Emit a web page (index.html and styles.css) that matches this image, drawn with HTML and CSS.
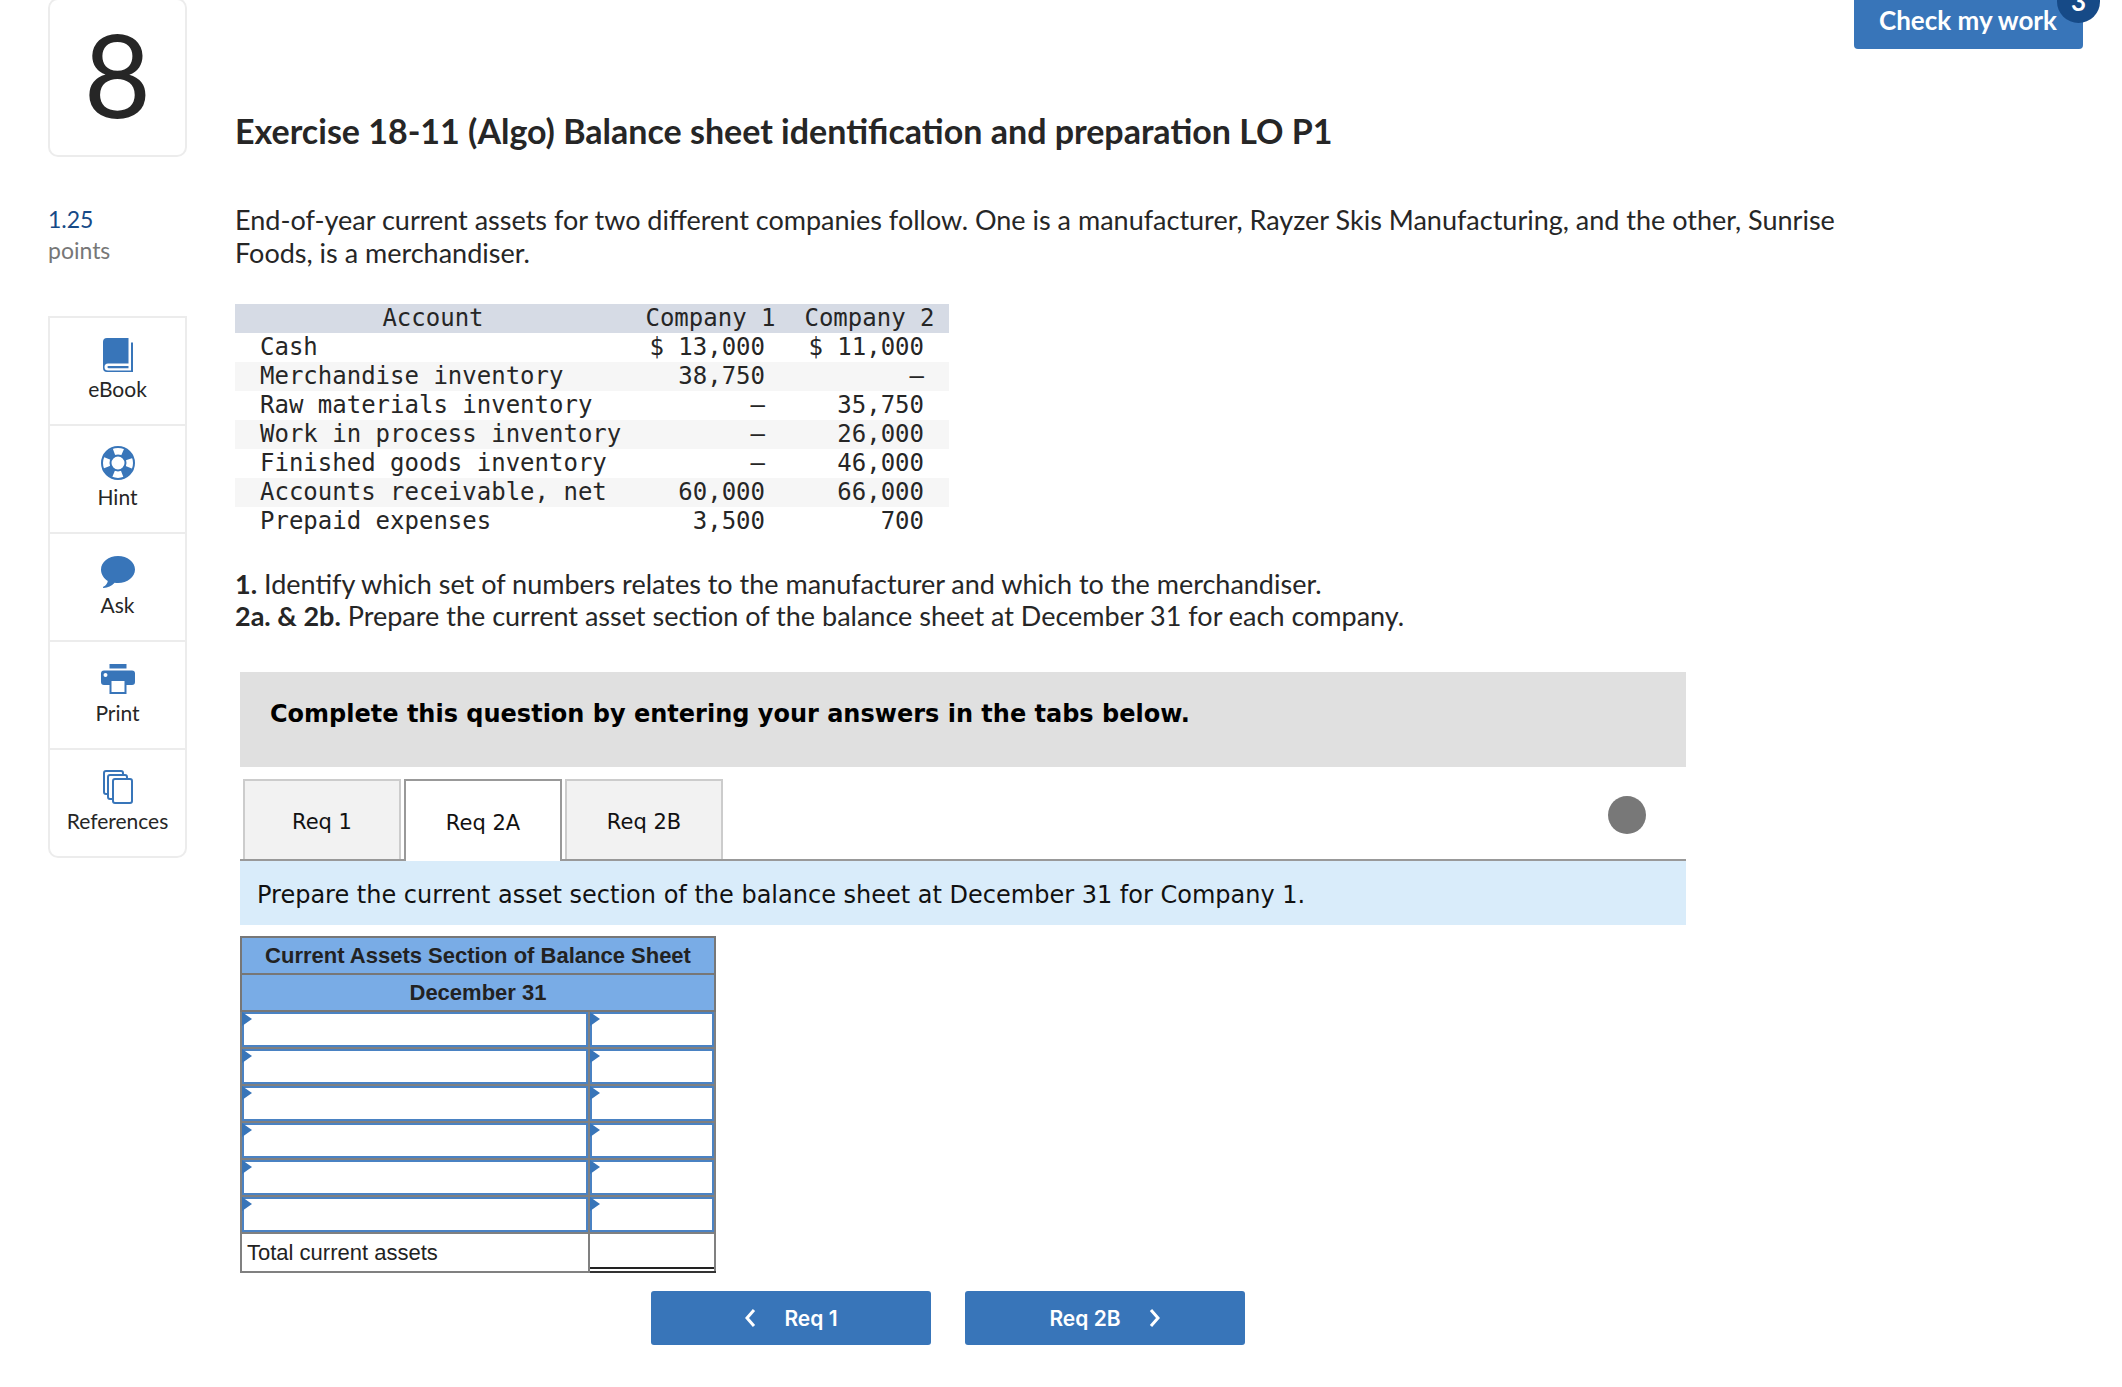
FILE: index.html
```html
<!DOCTYPE html>
<html lang="en">
<head>
  <meta charset="UTF-8" />
  <meta name="viewport" content="width=device-width, initial-scale=1"/>
  <title>Exercise 18-11</title>
  <link rel="stylesheet" href="styles.css">
</head>
<body>
  <div class="page">
    <aside class="sidebar">
      <div class="number">8</div>
      <div class="points"><strong>1.25</strong>points</div>
      <div class="tools">
        <button type="button" class="tool">
          <svg viewBox="0 0 34 34"><path d="M6 0h21.500v25.500H7a3.500 3.500 0 0 0 0 7h23V4.500h2V34H6a4 4 0 0 1-4-4V4a4 4 0 0 1 4-4z"/><path d="M7.500 28h20v2.200h-20a1.100 1.100 0 0 1 0-2.200z"/></svg>
          eBook
        </button>
        <button type="button" class="tool">
          <svg viewBox="0 0 34 34"><circle cx="17" cy="17" r="16" fill="none" stroke="#3875b9" stroke-width="2"/><circle cx="17" cy="17" r="7.500" fill="none" stroke="#3875b9" stroke-width="2"/><circle cx="17" cy="17" r="11.500" fill="none" stroke="#3875b9" stroke-width="8" stroke-dasharray="9.460 8.600" stroke-dashoffset="-4.300"/></svg>
          Hint
        </button>
        <button type="button" class="tool">
          <svg viewBox="0 0 34 34"><path d="M17 2c9.400 0 17 6 17 13.500S26.400 29 17 29c-1.200 0-2.300-.1-3.400-.3C10.500 32 7 33.800 2.500 34c-.6 0-.8-.8-.2-1.200 2.700-1.500 4.100-3.300 4.500-5.900C2.700 24.400 0 20.200 0 15.500 0 8 7.600 2 17 2z"/></svg>
          Ask
        </button>
        <button type="button" class="tool">
          <svg viewBox="0 0 34 34"><path d="M8.500 2h17v4.500h-17z"/><path fill-rule="evenodd" d="M3 8.500h28a3 3 0 0 1 3 3V20a3 3 0 0 1-3 3h-5.500v9h-17v-9H3a3 3 0 0 1-3-3v-8.500a3 3 0 0 1 3-3zM10.500 19v11h13V19zM4.500 11a2 2 0 1 0 0 4 2 2 0 0 0 0-4z"/></svg>
          Print
        </button>
        <button type="button" class="tool">
          <svg viewBox="0 0 34 34"><g fill="#fff" stroke="#3875b9" stroke-width="2"><rect x="3" y="1" width="19" height="23" rx="2"/><rect x="7" y="5" width="19" height="24" rx="2"/><rect x="12" y="9" width="19" height="24" rx="2"/></g></svg>
          References
        </button>
      </div>
    </aside>

    <main class="content">
      <h1>Exercise 18-11 (Algo) Balance sheet identification and preparation LO P1</h1>
      <p class="intro">End-of-year current assets for two different companies follow. One is a manufacturer, Rayzer Skis Manufacturing, and the other, Sunrise Foods, is a merchandiser.</p>

      <table class="accounts">
        <thead>
          <tr><th class="account">Account</th><th>Company 1</th><th>Company 2</th></tr>
        </thead>
        <tbody>
          <tr><td>Cash</td><td>$ 13,000</td><td>$ 11,000</td></tr>
          <tr><td>Merchandise inventory</td><td>38,750</td><td>–</td></tr>
          <tr><td>Raw materials inventory</td><td>–</td><td>35,750</td></tr>
          <tr><td>Work in process inventory</td><td>–</td><td>26,000</td></tr>
          <tr><td>Finished goods inventory</td><td>–</td><td>46,000</td></tr>
          <tr><td>Accounts receivable, net</td><td>60,000</td><td>66,000</td></tr>
          <tr><td>Prepaid expenses</td><td>3,500</td><td>700</td></tr>
        </tbody>
      </table>

      <p class="tasks"><b>1.</b> Identify which set of numbers relates to the manufacturer and which to the merchandiser.<br>
      <b>2a. &amp; 2b.</b> Prepare the current asset section of the balance sheet at December 31 for each company.</p>

      <section class="question">
        <h2>Complete this question by entering your answers in the tabs below.</h2>
        <div class="tabs">
          <button type="button" class="tab">Req 1</button>
          <button type="button" class="tab active">Req 2A</button>
          <button type="button" class="tab">Req 2B</button>
          <span class="dot"></span>
        </div>
        <p class="prompt">Prepare the current asset section of the balance sheet at December 31 for Company 1.</p>

        <table class="answer">
          <colgroup><col><col class="amount"></colgroup>
          <thead>
            <tr><th colspan="2">Current Assets Section of Balance Sheet</th></tr>
            <tr><th colspan="2">December 31</th></tr>
          </thead>
          <tbody>
            <tr><td class="entry"><input type="text" aria-label="Account 1"></td><td class="entry"><input type="text" aria-label="Amount 1"></td></tr>
            <tr><td class="entry"><input type="text" aria-label="Account 2"></td><td class="entry"><input type="text" aria-label="Amount 2"></td></tr>
            <tr><td class="entry"><input type="text" aria-label="Account 3"></td><td class="entry"><input type="text" aria-label="Amount 3"></td></tr>
            <tr><td class="entry"><input type="text" aria-label="Account 4"></td><td class="entry"><input type="text" aria-label="Amount 4"></td></tr>
            <tr><td class="entry"><input type="text" aria-label="Account 5"></td><td class="entry"><input type="text" aria-label="Amount 5"></td></tr>
            <tr><td class="entry"><input type="text" aria-label="Account 6"></td><td class="entry"><input type="text" aria-label="Amount 6"></td></tr>
            <tr class="total"><td>Total current assets</td><td class="sum"><output></output></td></tr>
          </tbody>
        </table>

        <div class="pager">
          <button type="button" class="nav">
            <svg viewBox="0 0 12 20"><path d="M10 2L3 10l7 8"/></svg>
            Req 1
          </button>
          <button type="button" class="nav">
            Req 2B
            <svg viewBox="0 0 12 20"><path d="M2 2l7 8-7 8"/></svg>
          </button>
        </div>
      </section>
    </main>

    <div class="actions">
      <button type="button" class="check">Check my work<span class="badge">3</span></button>
    </div>
  </div>
</body>
</html>
```
FILE: styles.css
```css
*, *::before, *::after { box-sizing: border-box; margin: 0; padding: 0; }
body { font-family: Lato, sans-serif; font-size: 27px; background: #fff; color: #262626; }
button { border: none; font-family: inherit; cursor: pointer; }
.page { display: flex; align-items: flex-start; padding: 0 39px 0 48px; }

/* Sidebar */
.sidebar { flex: none; width: 139px; margin-right: 48px; }
.number { height: 159px; margin-top: -2px; border: 2px solid #ececec; border-radius: 10px; font-size: 116px; line-height: 148px; text-align: center; }
.points { margin: 47px 0 50px; font-size: 23px; line-height: 31px; color: #777; }
.points strong { display: block; font-weight: 400; color: #164a87; }
.tools { border: 2px solid #ececec; border-radius: 0 0 10px 10px; }
.tool { display: flex; flex-direction: column; align-items: center; width: 100%; height: 108px; padding-top: 20px; background: none; border-bottom: 2px solid #ececec; font-size: 21px; line-height: 33px; color: #262626; }
.tool:last-child { height: 106px; border-bottom: none; }
.tool svg { width: 34px; height: 34px; fill: #3875b9; }

/* Exercise text */
.content { flex: 1; min-width: 0; }
h1 { margin-top: 111px; font-size: 34px; line-height: 40px; }
.intro { margin-top: 52px; line-height: 33px; }
.tasks { margin-top: 32px; line-height: 32px; }

.accounts { margin-top: 35px; width: 714px; border-collapse: collapse; table-layout: fixed; font: 24px/29px "DejaVu Sans Mono", monospace; }
.accounts th { background: #d6dbe5; font-weight: 400; white-space: nowrap; }
.accounts .account { width: 396px; }
.accounts td { padding-right: 25px; text-align: right; }
.accounts td:first-child { padding: 0 0 0 25px; text-align: left; }
.accounts tbody tr:nth-child(even) { background: #f6f6f6; }

/* Question panel */
.question { max-width: 1446px; margin: 40px 0 0 5px; font-family: "DejaVu Sans", sans-serif; color: #000; }
h2 { height: 95px; padding: 25px 30px; background: #e0e0e0; font-size: 24px; line-height: 34px; }
.tabs { display: flex; align-items: flex-end; gap: 3px; height: 94px; padding-left: 3px; border-bottom: 2px solid #999; }
.tab { width: 158px; height: 80px; padding-top: 3px; background: #f2f2f2; border: 2px solid #ccc; border-bottom: none; font-size: 21px; color: #111; }
.tab.active { height: 82px; margin-bottom: -2px; background: #fff; border-color: #999; }
.dot { width: 38px; height: 38px; margin: 0 40px 25px auto; border-radius: 50%; background: #787878; }
.prompt { padding: 18px 17px 14px; background: #d9ecfa; font-size: 24px; line-height: 32px; color: #111; }

/* Answer table */
.answer { width: 476px; margin-top: 11px; border-collapse: collapse; table-layout: fixed; font: 22px/30px "Liberation Sans", sans-serif; color: #222; }
.answer .amount { width: 126px; }
.answer th { height: 37px; background: #79ace6; border: 2px solid #777; }
.answer td { height: 37px; border: 2px solid #808080; }
.entry { position: relative; }
.entry::before { content: ""; position: absolute; left: 0; top: 0; border: 7px solid transparent; border-left: 10px solid #3875b9; border-right: none; }
.entry input { display: block; width: 100%; height: 35px; padding: 0 10px; border: 2px solid #4a82c3; font: inherit; }
.answer .total td { height: 39px; padding-left: 5px; }
.answer .total .sum { padding: 0; border-top-color: #222; border-bottom-color: #333; vertical-align: top; }
.sum output { display: block; height: 35px; border-bottom: 2px solid #222; }

.pager { display: flex; justify-content: center; gap: 34px; margin: 18px 30px 0 0; }
.nav { display: flex; align-items: center; justify-content: center; gap: 28px; width: 280px; height: 54px; border-radius: 3px; background: #3875b9; font: 600 21px Inter, sans-serif; color: #fff; }
.nav svg { width: 12px; height: 20px; fill: none; stroke: #fff; stroke-width: 3; }

/* Check button */
.actions { flex: none; }
.check { position: relative; width: 229px; height: 55px; margin-top: -6px; padding: 0 25px 3px; border-radius: 4px; background: #3875b9; font-size: 26px; font-weight: 700; color: #fff; text-align: left; white-space: nowrap; }
.badge { position: absolute; top: -14px; right: -17px; width: 43px; height: 43px; border-radius: 50%; background: #164a87; font-size: 26px; line-height: 42px; text-align: center; }
```
